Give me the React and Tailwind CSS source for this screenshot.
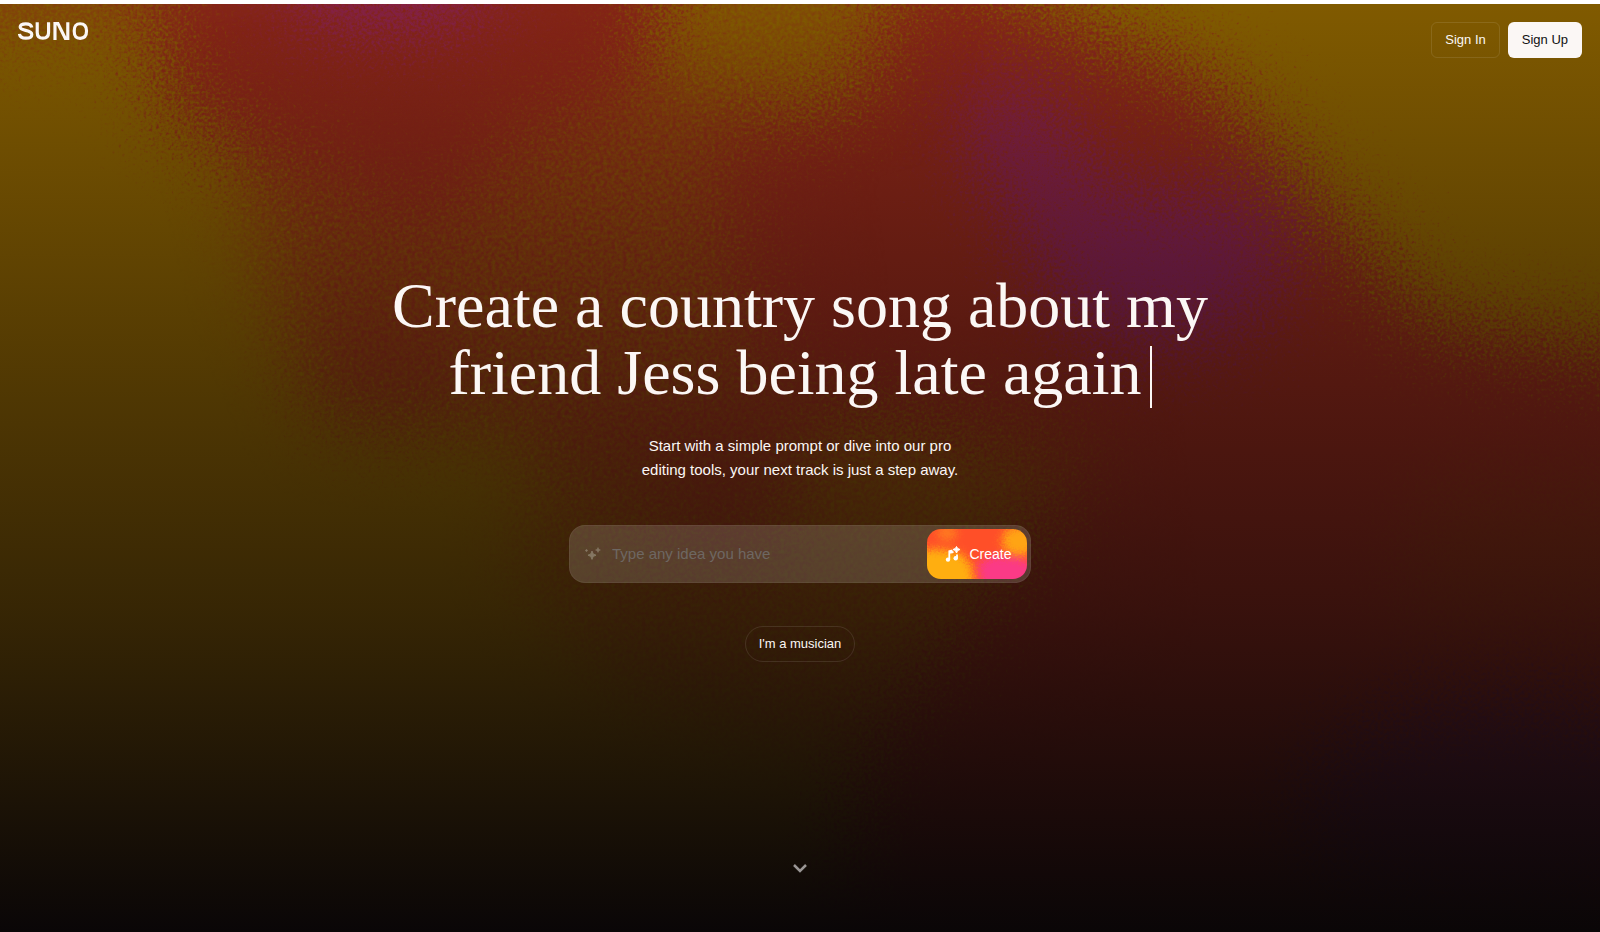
import React from 'react';

// Soft colour blobs behind the hero, roughened so the edges look sprayed
function HeroBackdrop() {
  return (
    <svg
      aria-hidden="true"
      className="absolute inset-0 h-full w-full"
      viewBox="0 0 1600 928"
      preserveAspectRatio="none"
    >
      <defs>
        <filter id="spray" x="-150" y="-150" width="1900" height="1228" filterUnits="userSpaceOnUse" colorInterpolationFilters="sRGB">
          <feGaussianBlur in="SourceGraphic" stdDeviation="32" result="soft" />
          <feTurbulence type="fractalNoise" baseFrequency="0.32" numOctaves="2" seed="4" result="noise" />
          <feDisplacementMap in="soft" in2="noise" scale="170" xChannelSelector="R" yChannelSelector="G" />
        </filter>
        {/* speckle: keeps only the noisy part of a blurred shape */}
        <filter id="speckle" x="-150" y="-150" width="1900" height="1228" filterUnits="userSpaceOnUse" colorInterpolationFilters="sRGB">
          <feGaussianBlur in="SourceGraphic" stdDeviation="36" result="soft" />
          <feTurbulence type="fractalNoise" baseFrequency="0.26" numOctaves="2" seed="9" />
          <feColorMatrix values="0 0 0 0 0  0 0 0 0 0  0 0 0 0 0  2.2 0 0 0 -0.6" result="grain" />
          <feComposite in="soft" in2="grain" operator="in" />
        </filter>
        <linearGradient id="fade" x1="0" y1="0" x2="0" y2="1">
          <stop offset="0" stopColor="#0a0607" stopOpacity="0" />
          <stop offset="0.43" stopColor="#0a0607" stopOpacity="0.42" />
          <stop offset="0.65" stopColor="#0a0607" stopOpacity="0.62" />
          <stop offset="0.86" stopColor="#0a0607" stopOpacity="0.85" />
          <stop offset="1" stopColor="#0a0607" stopOpacity="1" />
        </linearGradient>
      </defs>
      <g filter="url(#spray)">
        <rect x="-300" y="-300" width="2200" height="1600" fill="#805a00" />
        <path d="M-100 -200L160 -200L150 20L-100 20Z" fill="#842416" fillOpacity="0.45" />
        <path d="M130 -200L690 -200L650 90L520 130L480 180L410 230L360 180L270 150L170 110Z" fill="#842416" />
        <path d="M910 -60L1060 10L1210 80L1330 210L1430 320L1700 360L1700 1200L820 1200L860 760L980 600L1060 500L900 420L780 400L740 300L720 130L860 90Z" fill="#842416" />
        <path d="M240 120L480 70L760 100L800 430L700 560L500 420L330 400L290 280Z" fill="#842416" fillOpacity="0.35" />
        <path d="M320 310L440 310L480 400L400 420L310 390Z" fill="#842416" fillOpacity="0.4" />
        <path d="M560 380L1080 380L1100 700L860 760L640 700L530 560Z" fill="#842416" fillOpacity="0.2" />
        <path d="M660 420L800 400L780 560L700 560Z" fill="#842416" fillOpacity="0.5" />
        <ellipse cx="980" cy="455" rx="110" ry="36" fill="#805a00" fillOpacity="0.45" />
        <path d="M1420 480L1700 480L1700 620L1400 620Z" fill="#805a00" fillOpacity="0.15" />
        <ellipse cx="390" cy="-18" rx="110" ry="32" fill="#84205c" />
        <path d="M970 80L1040 90L1100 190L1270 200L1290 270L1220 340L1090 340L1020 220L970 130Z" fill="#7c1f4c" />
        <ellipse cx="1500" cy="810" rx="200" ry="110" fill="#4c1c60" fillOpacity="0.5" />
      </g>
      <g filter="url(#speckle)" fill="#842416">
        <path d="M230 100L480 70L780 90L820 430L720 520L500 420L330 420L270 280Z" fillOpacity="0.85" />
        <path d="M540 380L1100 400L1120 620L860 760L620 680L520 560Z" fillOpacity="0.45" />
        <path d="M660 -60L920 -60L900 90L700 110Z" fillOpacity="0.35" />
      </g>
      <rect width="1600" height="928" fill="url(#fade)" />
    </svg>
  );
}

function Logo() {
  return (
    <svg className="h-[18px] w-[71px]" viewBox="0 0 72 18" fill="none" stroke="#fbf7f5" strokeWidth="3.2" role="img" aria-label="SUNO">
      <path d="M14 5.5C13.5 3 11.5 1.7 8 1.7C4.5 1.7 2.2 2.9 2.2 5C2.2 9.5 14 7.2 14 12.5C14 15 11.5 16.3 8 16.3C4.3 16.3 1.8 15 1.5 12" />
      <path d="M19.5 0V10.5C19.5 14.3 21.5 16.3 25.2 16.3C29 16.3 31 14.3 31 10.5V0" />
      <path d="M37.5 18V1.5H40.5L48 16.5H50.5V0" />
      <path d="M63 1.6C58.5 1.6 57 4 57 9C57 14 58.5 16.4 63 16.4C67.5 16.4 69.5 14 69.5 9C69.5 4 67.5 1.6 63 1.6Z" />
    </svg>
  );
}

function SparklesIcon() {
  return (
    <svg className="h-4 w-4 shrink-0" viewBox="0 0 16 16" fill="#857663" aria-hidden="true">
      <path d="M7 5L8.2 8L11 9.2L8.2 10.4L7 13.4L5.8 10.4L3 9.2L5.8 8Z" stroke="#857663" />
      <path d="M13 1.5L13.8 3.2L15.5 4L13.8 4.8L13 6.5L12.2 4.8L10.5 4L12.2 3.2Z" stroke="#857663" strokeWidth="0.5" />
      <path d="M1.5 3L3 4.5L1.5 6L0 4.5Z" />
    </svg>
  );
}

function MusicSparkIcon() {
  return (
    <svg className="h-4 w-4 shrink-0" viewBox="0 0 16 16" fill="white" aria-hidden="true">
      <path d="M11.5 0.5L12.6 2.4L15 3.5L12.6 4.6L11.5 7L10.4 4.6L8 3.5L10.4 2.4Z" stroke="white" strokeLinejoin="round" />
      <path d="M4.3 13V5.2L7.5 4.5M4.3 6.8L8.5 6M12 8.5V12" fill="none" stroke="white" strokeWidth="1.8" />
      <circle cx="3" cy="13.6" r="2.2" />
      <circle cx="10.7" cy="12.2" r="2.2" />
    </svg>
  );
}

function CreateBackdrop() {
  return (
    <svg aria-hidden="true" className="absolute inset-0 h-full w-full" viewBox="0 0 100 50" preserveAspectRatio="none">
      <defs>
        <filter id="warm" x="-15" y="-15" width="130" height="80" filterUnits="userSpaceOnUse" colorInterpolationFilters="sRGB">
          <feGaussianBlur in="SourceGraphic" stdDeviation="4" result="soft" />
          <feTurbulence type="fractalNoise" baseFrequency="0.6" numOctaves="2" result="noise" />
          <feDisplacementMap in="soft" in2="noise" scale="8" xChannelSelector="R" yChannelSelector="G" />
        </filter>
      </defs>
      <g filter="url(#warm)">
        <rect x="-40" y="-40" width="180" height="130" fill="#ff4f28" />
        <path d="M-30 22L14 20L34 24L44 36L52 80L-30 80Z" fill="#ffae10" />
        <ellipse cx="92" cy="12" rx="17" ry="15" fill="#ffa414" />
        <ellipse cx="20" cy="4" rx="10" ry="8" fill="#ff7a20" />
        <path d="M50 34L68 26L88 28L130 44L110 80L60 80Z" fill="#fb3a86" />
      </g>
    </svg>
  );
}

export default function App() {
  return (
    <div className="flex min-h-screen flex-col bg-white pt-1 font-['Liberation_Sans',Arial,sans-serif] text-[#fbf7f5]">
      <div className="relative isolate flex flex-1 flex-col overflow-hidden bg-[#0a0607]">
        <HeroBackdrop />

        <header className="relative flex items-start justify-between px-[18px] pt-[18px]">
          <a href="#home">
            <Logo />
          </a>
          <nav className="flex gap-2 text-[13px]">
            <button className="h-9 rounded-md border border-white/10 px-[13px]">Sign In</button>
            <button className="h-9 rounded-md bg-[#fbf7f5] px-[14px] text-[#101012]">Sign Up</button>
          </nav>
        </header>

        <main className="relative flex flex-1 flex-col items-center pt-[214px]">
          <h1 className="text-center font-['Liberation_Serif',serif] text-[64px] leading-[67px]">
            Create a country song about my
            <br />
            friend Jess being late again
            <span className="ml-2 inline-block h-[62px] w-[2px] bg-[#fbf7f5] align-[-14px]" />
          </h1>

          <p className="mt-[26px] text-center text-[15px] leading-6">
            Start with a simple prompt or dive into our pro
            <br />
            editing tools, your next track is just a step away.
          </p>

          <form
            className="mt-[43px] flex w-full max-w-[462px] items-center rounded-2xl border border-white/5 bg-white/15 p-[3px] pl-[15px]"
            onSubmit={(e) => e.preventDefault()}
          >
            <SparklesIcon />
            <input
              type="text"
              aria-label="Song idea"
              placeholder="Type any idea you have"
              className="ml-[11px] min-w-0 flex-1 bg-transparent text-[15px] outline-none placeholder:text-[#6e6762]"
            />
            <button className="relative h-[50px] w-[100px] overflow-hidden rounded-[14px] pl-[3px] text-sm text-white">
              <CreateBackdrop />
              <span className="relative flex items-center justify-center gap-2">
                <MusicSparkIcon />
                Create
              </span>
            </button>
          </form>

          <button className="mt-[43px] h-9 rounded-full border border-white/10 px-[13px] text-[13px]">I'm a musician</button>
        </main>

        <button aria-label="Scroll down" className="relative mx-auto mb-[58px] text-[#9a9695]">
          <svg className="h-3 w-4" viewBox="0 0 16 12" fill="none" stroke="currentColor" strokeWidth="2.5" aria-hidden="true">
            <path d="M2 3L8 9L14 3" />
          </svg>
        </button>
      </div>
    </div>
  );
}
